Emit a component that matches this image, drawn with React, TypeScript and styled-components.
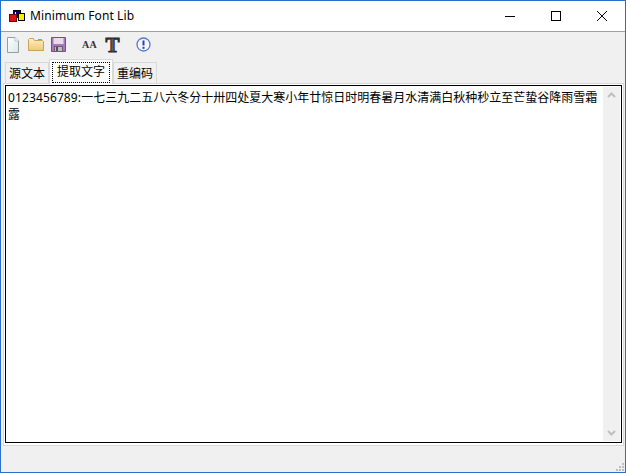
import React from "react";
import styled, { createGlobalStyle } from "styled-components";

const GlobalStyle = createGlobalStyle`
  html, body {
    margin: 0;
    padding: 0;
    background: #f0f0f0;
    overflow: hidden;
  }
`;

const FONT = `"Noto Sans", "Noto Sans CJK SC", sans-serif`;

const Window = styled.div`
  width: 626px;
  height: 473px;
  box-sizing: border-box;
  border: 1px solid #2a6fc9;
  background: #f0f0f0;
  display: flex;
  flex-direction: column;
  font-family: ${FONT};
  color: #000;
`;

const TitleBar = styled.header`
  height: 31px;
  flex: none;
  box-sizing: border-box;
  background: #fff;
  border-bottom: 1px solid #a0a0a0;
  display: flex;
  align-items: center;
  padding-left: 8px;
`;

const Title = styled.span`
  font-size: 12px;
  line-height: 16px;
  margin: -1px 0 0 5px;
  flex: 1;
  letter-spacing: 0.1px;
`;

const WinButton = styled.button`
  width: 46px;
  height: 30px;
  border: 0;
  padding: 0 0 1px 0;
  background: transparent;
  display: flex;
  align-items: center;
  justify-content: center;
`;

const Toolbar = styled.div`
  height: 25px;
  flex: none;
  display: flex;
  align-items: center;
`;

const ToolIcon = styled.span<{ $gap?: boolean }>`
  width: 23px;
  height: 20px;
  margin-left: ${(p) => (p.$gap ? 8 : 0)}px;
  display: flex;
  align-items: center;
  justify-content: center;
`;

const SmallCaps = styled.span`
  font-family: "Liberation Serif", serif;
  font-weight: bold;
  font-size: 10px;
  line-height: 10px;
  color: #333;
  letter-spacing: 0.3px;
`;

const BigLetter = styled.span`
  font-family: "Liberation Serif", serif;
  font-weight: bold;
  font-size: 21px;
  line-height: 20px;
  color: #5c5c5c;
  -webkit-text-stroke: 1px #2a2a2a;
`;

const TabStrip = styled.div`
  height: 26px;
  flex: none;
  display: flex;
  align-items: flex-end;
  padding-left: 4px;
  position: relative;
  z-index: 1;
`;

const Tab = styled.div`
  box-sizing: border-box;
  height: 21px;
  padding: 0 3px;
  border: 1px solid #d9d9d9;
  border-bottom: 0;
  font-size: 12px;
  line-height: 21px;
  white-space: nowrap;
`;

const ActiveTab = styled(Tab)`
  height: 25px;
  padding: 2px;
  margin-bottom: -1px;
  background: #fff;
`;

const FocusLabel = styled.span`
  display: block;
  height: 21px;
  padding: 0 5px;
  line-height: 19px;
  outline: 1px dotted #000;
  outline-offset: -1px;
`;

const TabPage = styled.div`
  flex: 1;
  min-height: 0;
  margin: 0 1px 0 2px;
  padding: 1px 1px 2px 1px;
  border: 1px solid #d9d9d9;
  box-sizing: border-box;
  background: #fff;
  display: flex;
`;

const TextBox = styled.div`
  flex: 1;
  border: 1px solid #000;
  display: flex;
  min-width: 0;
`;

const TextBody = styled.div`
  flex: 1;
  min-width: 0;
  padding: 3px 2px 0 2px;
  font-size: 12px;
  line-height: 17px;
`;

const TextLine = styled.div`
  white-space: nowrap;
`;

const Digits = styled.span`
  letter-spacing: 0.12px;
`;

const ScrollBar = styled.div`
  width: 17px;
  flex: none;
  margin: 1px 1px 1px 0;
  background: #f0f0f0;
  display: flex;
  flex-direction: column;
  justify-content: space-between;
  align-items: center;
  padding: 5px 0;
  box-sizing: border-box;
`;

const StatusBar = styled.footer`
  height: 26px;
  flex: none;
  display: flex;
  align-items: flex-end;
  justify-content: flex-end;
  padding: 0 1px 1px 0;
  box-sizing: border-box;
`;

const AppLogo = () => (
  <svg width="16" height="12" viewBox="0 0 16 12">
    <rect x="4.5" y=".5" width="7" height="7" fill="#000090" stroke="#000" />
    <rect x="6" y="2" width="1" height="3" fill="#fff" />
    <rect x=".5" y="4.5" width="7" height="7" fill="#e01010" stroke="#700" />
    <rect x="9.5" y="3.5" width="6" height="7" fill="#ffee00" stroke="#000" />
  </svg>
);

const NewFileIcon = () => (
  <svg width="12" height="16" viewBox="0 0 12 16">
    <defs>
      <linearGradient id="page" x1="0" y1="0" x2="1" y2="1">
        <stop offset="0" stopColor="#ffffff" />
        <stop offset="1" stopColor="#d6e8e8" />
      </linearGradient>
    </defs>
    <path d="M.5.5h7.5l3.5 3.5v11.5H.5z" fill="url(#page)" stroke="#8fa2a0" />
    <path d="M8 .5v3.5h3.5" fill="#fff" stroke="#b4c4c2" />
  </svg>
);

const FolderIcon = () => (
  <svg width="16" height="13" viewBox="0 0 16 13">
    <defs>
      <linearGradient id="folder" x1="0" y1="0" x2="0" y2="1">
        <stop offset="0" stopColor="#fdeebf" />
        <stop offset="1" stopColor="#f0c978" />
      </linearGradient>
    </defs>
    <path d="M.5 12.5V1.5l1-1h4l1 2h8l1 1v9z" fill="url(#folder)" stroke="#c9a25c" />
    <rect x="10" y="1" width="4" height="1" fill="#4fb3e8" />
  </svg>
);

const SaveIcon = () => (
  <svg width="15" height="15" viewBox="0 0 15 15">
    <path d="M.5.5h14v14H.5z" fill="#a878b8" stroke="#7d4a90" />
    <rect x="2.5" y="1" width="10" height="6" fill="#e6dcec" />
    <rect x="3.5" y="9.5" width="8" height="5" fill="#c0bcc4" stroke="#6f5a78" />
    <rect x="5" y="10" width="2" height="4" fill="#555" />
  </svg>
);

const InfoIcon = () => (
  <svg width="15" height="15" viewBox="0 0 15 15">
    <circle cx="7.5" cy="7.5" r="6.5" fill="#f4f6fc" stroke="#5578dc" strokeWidth="1.3" />
    <rect x="6.5" y="3.5" width="2" height="5" fill="#2a3fb0" />
    <rect x="6.5" y="9.8" width="2" height="2" fill="#2a3fb0" />
  </svg>
);

const MinIcon = () => (
  <svg width="10" height="10" viewBox="0 0 10 10">
    <path d="M0 5.5h10" stroke="#000" />
  </svg>
);

const MaxIcon = () => (
  <svg width="10" height="10" viewBox="0 0 10 10">
    <rect x=".5" y=".5" width="9" height="9" fill="none" stroke="#000" />
  </svg>
);

const CloseIcon = () => (
  <svg width="10" height="10" viewBox="0 0 10 10">
    <path d="M0 0l10 10M10 0 0 10" stroke="#000" strokeWidth="1" />
  </svg>
);

const Chevron = ({ up }: { up?: boolean }) => (
  <svg width="9" height="6" viewBox="0 0 9 6">
    <path d={up ? "M1 5l3.5-3.5L8 5" : "M1 1l3.5 3.5L8 1"} fill="none" stroke="#bfbfbf" strokeWidth="2" />
  </svg>
);

const Grip = () => (
  <svg width="8" height="8" viewBox="0 0 8 8" fill="#bdbdbd">
    <rect x="6" y="0" width="2" height="2" />
    <rect x="3" y="3" width="2" height="2" />
    <rect x="6" y="3" width="2" height="2" />
    <rect x="0" y="6" width="2" height="2" />
    <rect x="3" y="6" width="2" height="2" />
    <rect x="6" y="6" width="2" height="2" />
  </svg>
);

const FIRST_LINE =
  "一七三九二五八六冬分十卅四处夏大寒小年廿惊日时明春暑月水清满白秋种秒立至芒蛰谷降雨雪霜";

export default function App() {
  return (
    <>
      <GlobalStyle />
      <Window>
        <TitleBar>
          <AppLogo />
          <Title>Minimum Font Lib</Title>
          <WinButton><MinIcon /></WinButton>
          <WinButton><MaxIcon /></WinButton>
          <WinButton><CloseIcon /></WinButton>
        </TitleBar>
        <Toolbar>
          <ToolIcon><NewFileIcon /></ToolIcon>
          <ToolIcon><FolderIcon /></ToolIcon>
          <ToolIcon><SaveIcon /></ToolIcon>
          <ToolIcon $gap><SmallCaps>AA</SmallCaps></ToolIcon>
          <ToolIcon><BigLetter>T</BigLetter></ToolIcon>
          <ToolIcon $gap><InfoIcon /></ToolIcon>
        </Toolbar>
        <TabStrip>
          <Tab>源文本</Tab>
          <ActiveTab><FocusLabel>提取文字</FocusLabel></ActiveTab>
          <Tab>重编码</Tab>
        </TabStrip>
        <TabPage>
          <TextBox>
            <TextBody>
              <TextLine><Digits>0123456789:</Digits>{FIRST_LINE}</TextLine>
              <TextLine>露</TextLine>
            </TextBody>
            <ScrollBar>
              <Chevron up />
              <Chevron />
            </ScrollBar>
          </TextBox>
        </TabPage>
        <StatusBar><Grip /></StatusBar>
      </Window>
    </>
  );
}
